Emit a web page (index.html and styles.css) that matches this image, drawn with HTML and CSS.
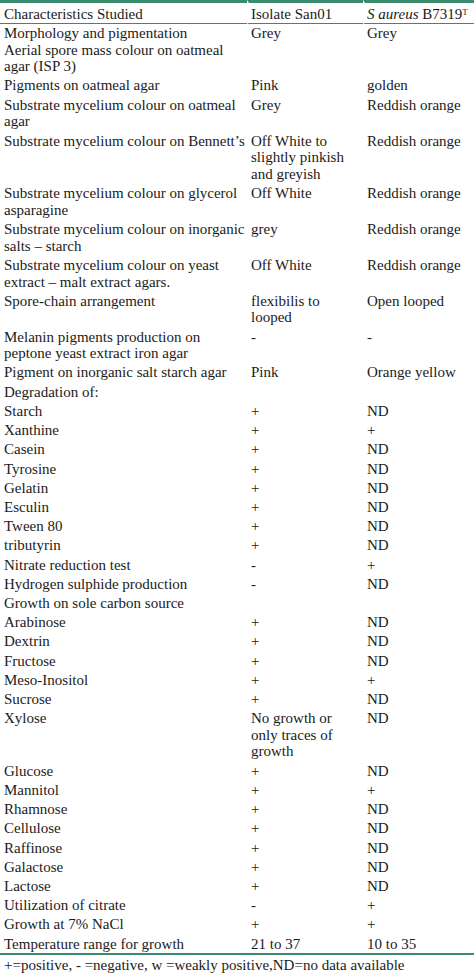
FILE: index.html
```html
<!DOCTYPE html>
<html>
<head>
<meta charset="utf-8">
<link rel="stylesheet" href="styles.css">
</head>
<body>
<table class="data">
  <colgroup><col class="c1"><col class="c2"><col class="c3"></colgroup>
  <thead>
    <tr><th>Characteristics Studied</th><th class="sep">Isolate San01</th><th class="sep"><i>S aureus</i> B7319<sup>T</sup></th></tr>
  </thead>
  <tbody>
    <tr><td>Morphology and pigmentation<br>Aerial spore mass colour on oatmeal agar (ISP 3)</td><td>Grey</td><td>Grey</td></tr>
    <tr><td>Pigments on oatmeal agar</td><td>Pink</td><td>golden</td></tr>
    <tr><td>Substrate mycelium colour on oatmeal agar</td><td>Grey</td><td>Reddish orange</td></tr>
    <tr><td>Substrate mycelium colour on Bennett’s</td><td>Off White to<br>slightly pinkish<br>and greyish</td><td>Reddish orange</td></tr>
    <tr><td>Substrate mycelium colour on glycerol asparagine</td><td>Off White</td><td>Reddish orange</td></tr>
    <tr><td>Substrate mycelium colour on inorganic salts – starch</td><td>grey</td><td>Reddish orange</td></tr>
    <tr><td>Substrate mycelium colour on yeast extract – malt extract agars.</td><td>Off White</td><td>Reddish orange</td></tr>
    <tr><td>Spore-chain arrangement</td><td>flexibilis to<br>looped</td><td>Open looped</td></tr>
    <tr><td>Melanin pigments production on peptone yeast extract iron agar</td><td>-</td><td>-</td></tr>
    <tr><td>Pigment on inorganic salt starch agar</td><td>Pink</td><td>Orange yellow</td></tr>
    <tr><td>Degradation of:</td><td></td><td></td></tr>
    <tr><td>Starch</td><td>+</td><td>ND</td></tr>
    <tr><td>Xanthine</td><td>+</td><td>+</td></tr>
    <tr><td>Casein</td><td>+</td><td>ND</td></tr>
    <tr><td>Tyrosine</td><td>+</td><td>ND</td></tr>
    <tr><td>Gelatin</td><td>+</td><td>ND</td></tr>
    <tr><td>Esculin</td><td>+</td><td>ND</td></tr>
    <tr><td>Tween 80</td><td>+</td><td>ND</td></tr>
    <tr><td>tributyrin</td><td>+</td><td>ND</td></tr>
    <tr><td>Nitrate reduction test</td><td>-</td><td>+</td></tr>
    <tr><td>Hydrogen sulphide production</td><td>-</td><td>ND</td></tr>
    <tr><td>Growth on sole carbon source</td><td></td><td></td></tr>
    <tr><td>Arabinose</td><td>+</td><td>ND</td></tr>
    <tr><td>Dextrin</td><td>+</td><td>ND</td></tr>
    <tr><td>Fructose</td><td>+</td><td>ND</td></tr>
    <tr><td>Meso-Inositol</td><td>+</td><td>+</td></tr>
    <tr><td>Sucrose</td><td>+</td><td>ND</td></tr>
    <tr><td>Xylose</td><td>No growth or<br>only traces of<br>growth</td><td>ND</td></tr>
    <tr><td>Glucose</td><td>+</td><td>ND</td></tr>
    <tr><td>Mannitol</td><td>+</td><td>+</td></tr>
    <tr><td>Rhamnose</td><td>+</td><td>ND</td></tr>
    <tr><td>Cellulose</td><td>+</td><td>ND</td></tr>
    <tr><td>Raffinose</td><td>+</td><td>ND</td></tr>
    <tr><td>Galactose</td><td>+</td><td>ND</td></tr>
    <tr><td>Lactose</td><td>+</td><td>ND</td></tr>
    <tr><td>Utilization of citrate</td><td>-</td><td>+</td></tr>
    <tr><td>Growth at 7% NaCl</td><td>+</td><td>+</td></tr>
    <tr class="last"><td>Temperature range for growth</td><td>21 to 37</td><td>10 to 35</td></tr>
  </tbody>
</table>
<p class="note">+=positive, - =negative, w =weakly positive,ND=no data available</p>
</body>
</html>
```
FILE: styles.css
```css
html, body {
  margin: 0;
  padding: 0;
  background: #ffffff;
}
body {
  font-family: "Liberation Serif", "Times New Roman", serif;
  font-size: 15px;
  color: #1b1b1b;
  width: 474px;
}
.data {
  width: 474px;
  table-layout: fixed;
  border-collapse: separate;
  border-spacing: 0;
}
.c1 { width: 247px; }
.c2 { width: 116px; }
.c3 { width: 111px; }
.data th, .data td {
  text-align: left;
  vertical-align: top;
  font-weight: normal;
  line-height: 16.67px;
  padding: 1.27px 0 1.27px 4px;
}
.data th {
  border-top: 3px solid #3a8a6e;
  border-bottom: 1.5px solid #3a8a6e;
  padding-top: 2.5px;
  padding-bottom: 0.5px;
}
.data th.sep {
  border-left: 2px solid #ffffff;
  padding-left: 2px;
}
.data th sup {
  font-size: 9px;
  line-height: 0;
  vertical-align: 4px;
}
.data tr.last td {
  border-bottom: 2px solid #3a8a6e;
}
.note {
  margin: 0;
  padding: 1.7px 0 0 4px;
  line-height: 16.67px;
}
```
